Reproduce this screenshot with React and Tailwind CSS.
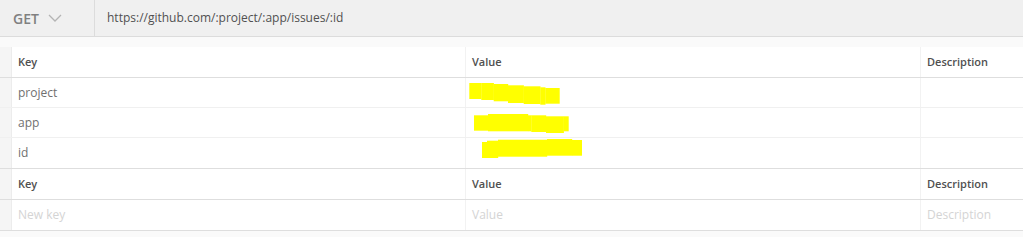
import React from "react";

const Y = "#ffff00";

function Highlight({ rects }) {
  return (
    <svg className="absolute left-0 top-0 pointer-events-none" width="130" height="30" viewBox="0 0 130 30">
      {rects.map((r, i) => (
        <rect key={i} x={r[0]} y={r[1]} width={r[2]} height={r[3]} fill={Y} />
      ))}
    </svg>
  );
}

const hl1 = [
  [3.3, 5, 12.2, 16],
  [15.3, 5, 12.6, 17],
  [27.7, 6, 14.5, 17.3],
  [42, 7.3, 15.9, 17.7],
  [57.7, 8.3, 16.8, 17.7],
  [74.3, 9.3, 5.2, 17.4],
  [79.3, 10, 14.4, 15.7],
];
const hl2 = [
  [8, 7.3, 14.2, 15.4],
  [22, 6, 40.2, 17.3],
  [62, 7.3, 3.5, 16],
  [65.3, 7.3, 14.9, 16.7],
  [80, 8.3, 17.9, 16.7],
  [97.7, 8.3, 5, 15],
];
const hl3 = [
  [16, 4, 5.2, 16],
  [21, 2.7, 11.2, 17.3],
  [32, 1.7, 49.2, 17],
  [81, 1, 25.2, 16.7],
  [106, 2, 10, 15.7],
];

function Row({ cells, border = "border-[#f0f0f0]", header = false, placeholder = false, hl, h = "h-[30px]" }) {
  const txt = header
    ? "text-[11px] font-semibold text-[#505050]"
    : placeholder
    ? "text-[12px] text-[#d4d4d4]"
    : "text-[12px] text-[#707070]";
  return (
    <div className={`grid grid-cols-[12px_454px_455px_1fr] ${h} box-content border-b ${border}`}>
      <div className="bg-[#f5f5f5] border-r border-[#ececec]" />
      <div className={`flex items-center pl-[6px] border-r border-[#f2f2f2] bg-white ${txt}`}>{cells[0]}</div>
      <div className={`relative flex items-center pl-[6px] border-r border-[#f2f2f2] bg-white ${txt}`}>
        {cells[1]}
        {hl && <Highlight rects={hl} />}
      </div>
      <div className={`flex items-center pl-[6px] bg-white ${txt}`}>{cells[2]}</div>
    </div>
  );
}

export default function App() {
  return (
    <div className="w-[1023px] h-[237px] bg-[#fafafa] overflow-hidden font-['Open_Sans',sans-serif]">
      <div className="h-[36px] box-content flex bg-[#f0f0f0] border-b border-[#dcdcdc]">
        <div className="w-[95px] flex items-center pl-[13px] border-r border-[#dcdcdc]">
          <span className="text-[14px] font-semibold text-[#808080]">GET</span>
          <svg className="ml-[9px]" width="14" height="8" viewBox="0 0 14 8">
            <polyline points="1,1 7,7 13,1" fill="none" stroke="#b4b4b4" strokeWidth="1.3" />
          </svg>
        </div>
        <div className="flex items-center pl-[12px] text-[12px] text-[#505050]">
          https://github.com/:project/:app/issues/:id
        </div>
      </div>
      <div className="h-[10px]" />
      <Row header cells={["Key", "Value", "Description"]} border="border-[#dedede]" />
      <Row cells={["project", "", ""]} hl={hl1} h="h-[29px]" />
      <Row cells={["app", "", ""]} hl={hl2} h="h-[29px]" />
      <Row cells={["id", "", ""]} hl={hl3} border="border-[#dedede]" />
      <Row header cells={["Key", "Value", "Description"]} border="border-[#dedede]" />
      <Row placeholder cells={["New key", "Value", "Description"]} border="border-[#dedede]" />
    </div>
  );
}
